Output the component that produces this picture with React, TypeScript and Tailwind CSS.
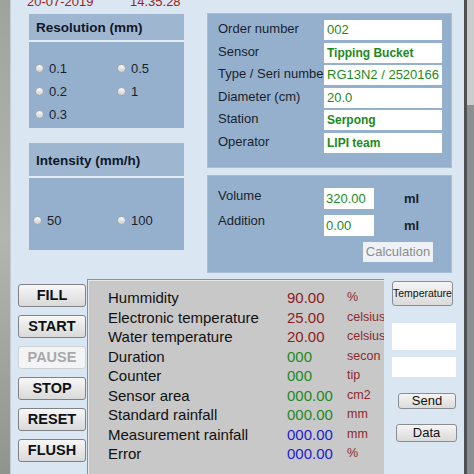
import type { ReactNode } from "react";

const sans = "font-['Liberation_Sans',Arial,sans-serif]";

const dataRows = [
  { label: "Hummidity", value: "90.00", unit: "%", tone: "red" },
  { label: "Electronic temperature", value: "25.00", unit: "celsius", tone: "red" },
  { label: "Water temperature", value: "20.00", unit: "celsius", tone: "red" },
  { label: "Duration", value: "000", unit: "secon", tone: "green" },
  { label: "Counter", value: "000", unit: "tip", tone: "green" },
  { label: "Sensor area", value: "000.00", unit: "cm2", tone: "green" },
  { label: "Standard rainfall", value: "000.00", unit: "mm", tone: "green" },
  { label: "Measurement rainfall", value: "000.00", unit: "mm", tone: "blue" },
  { label: "Error", value: "000.00", unit: "%", tone: "blue" },
];

const toneClass: Record<string, string> = {
  red: "text-[#8e1c1c]",
  green: "text-[#1c8a1c]",
  blue: "text-[#1c1cd2]",
};

const infoRows = [
  { label: "Order number", value: "002", bold: false },
  { label: "Sensor", value: "Tipping Bucket", bold: true },
  { label: "Type / Seri number", value: "RG13N2 / 2520166", bold: false },
  { label: "Diameter (cm)", value: "20.0", bold: false },
  { label: "Station", value: "Serpong", bold: true },
  { label: "Operator", value: "LIPI team", bold: true },
];

function Radio({ label }: { label: string }) {
  return (
    <div className="flex items-center gap-[5px] h-[23px]">
      <span className="w-[9px] h-[9px] rounded-full border border-[#a4a8ac] bg-gradient-to-b from-[#fafafa] to-[#cfd2d5]" />
      <span className="text-[13px] text-[#1a1f2c]">{label}</span>
    </div>
  );
}

function Panel({
  title,
  headH,
  bodyH,
  children,
}: {
  title: string;
  headH: string;
  bodyH: string;
  children: ReactNode;
}) {
  return (
    <div className="flex flex-col">
      <div className={`${headH} bg-[#9fb6d0] flex items-center pl-[7px] pt-[3px]`}>
        <span className="text-[13.5px] font-bold text-[#101828]">{title}</span>
      </div>
      <div className="h-[2px] bg-[#e4ecf4]" />
      <div className={`${bodyH} bg-[#95b0cd]`}>{children}</div>
    </div>
  );
}

function WinButton({ label, disabled }: { label: string; disabled?: boolean }) {
  return (
    <div
      className={
        disabled
          ? "h-[23px] rounded-[3px] border border-[#cdd2d7] bg-[#f3f4f5] flex items-center justify-center text-[14.5px] font-bold text-[#a9a9a9]"
          : "h-[23px] rounded-[3px] border border-[#7f8387] bg-gradient-to-b from-[#f7f7f7] to-[#d9d9d9] flex items-center justify-center text-[14.5px] font-bold text-[#111]"
      }
    >
      {label}
    </div>
  );
}

export default function App() {
  return (
    <div className={`w-[474px] h-[474px] overflow-hidden flex ${sans}`}>
      {/* desktop edge on the left */}
      <div className="w-[10px] h-full bg-gradient-to-b from-[#9ea49c] via-[#b3b6ae] to-[#8f948c]" />
      <div className="w-[1px] h-full bg-[#c3ccd4]" />

      <div className="w-[453px] h-full bg-[#dae6f2] flex flex-col">
        {/* clock row, cut at the top */}
        <div className="-mt-[6px] h-[15px] flex pl-[16px] text-[13px] leading-[15px] text-[#9a2424]">
          <span className="w-[103px]">20-07-2019</span>
          <span>14.35.28</span>
        </div>

        <div className="mt-[4px] flex pl-[18px]">
          <div className="w-[155px] pt-[1px] flex flex-col">
            <Panel title="Resolution (mm)" headH="h-[26px]" bodyH="h-[86px]">
              <div className="grid grid-cols-[82px_auto] pt-[15px] pl-[6px]">
                <Radio label="0.1" />
                <Radio label="0.5" />
                <Radio label="0.2" />
                <Radio label="1" />
                <Radio label="0.3" />
              </div>
            </Panel>
            <div className="mt-[15px]">
              <Panel title="Intensity (mm/h)" headH="h-[33px]" bodyH="h-[72px]">
                <div className="grid grid-cols-[84px_auto] pt-[31px] pl-[4px]">
                  <Radio label="50" />
                  <Radio label="100" />
                </div>
              </Panel>
            </div>
          </div>

          <div className="ml-[23px] w-[245px] flex flex-col">
            <div className="h-[155px] bg-[#95b0cd] border border-[#a9bed6] pt-[6px] pl-[10px] flex flex-col gap-[2.5px]">
              {infoRows.map((r) => (
                <div key={r.label} className="flex h-[20px] items-center">
                  <span className="w-[106px] overflow-hidden whitespace-nowrap text-[13px] text-[#1a1f2c] -mt-[2px]">
                    {r.label}
                  </span>
                  <span
                    className={`w-[118px] h-[20px] bg-white flex items-center pl-[3px] text-[#1c8a1c] ${
                      r.bold ? "text-[12px] font-bold" : "text-[13px]"
                    }`}
                  >
                    {r.value}
                  </span>
                </div>
              ))}
            </div>

            <div className="mt-[7px] h-[98px] bg-[#95b0cd] border border-[#a9bed6] pt-[12px] pl-[10px] flex flex-col">
              <div className="flex h-[21px] items-center">
                <span className="w-[106px] text-[13px] text-[#1a1f2c] -mt-[5px]">Volume</span>
                <span className="w-[50px] h-[21px] bg-white flex items-center pl-[2px] text-[13px] text-[#1c8a1c]">
                  320.00
                </span>
                <span className="ml-[30px] mt-[1px] text-[13px] font-bold text-[#1a1f2c]">ml</span>
              </div>
              <div className="mt-[6px] flex h-[21px] items-center">
                <span className="w-[106px] text-[13px] text-[#1a1f2c] -mt-[9px]">Addition</span>
                <span className="w-[50px] h-[21px] bg-white flex items-center pl-[2px] text-[13px] text-[#1c8a1c]">
                  0.00
                </span>
                <span className="ml-[30px] mt-[1px] text-[13px] font-bold text-[#1a1f2c]">ml</span>
              </div>
              <div className="mt-[6px] ml-[145px] w-[70px] h-[20px] bg-[#eef2f6] flex items-center justify-center text-[13px] text-[#8a8d91]">
                Calculation
              </div>
            </div>
          </div>
        </div>

        <div className="mt-[6px] flex pl-[7px] flex-1 min-h-0">
          <div className="w-[68px] pt-[5px] flex flex-col gap-[8px]">
            <WinButton label="FILL" />
            <WinButton label="START" />
            <WinButton label="PAUSE" disabled />
            <WinButton label="STOP" />
            <WinButton label="RESET" />
            <WinButton label="FLUSH" />
          </div>

          <div className="ml-[1px] w-[297px] h-[210px] bg-[#c8c8c8] border-t border-l border-[#8f8f8f] shadow-[inset_1px_1px_0_#e6e6e6] overflow-hidden pt-[8px] pl-[20px]">
            {dataRows.map((r) => (
              <div key={r.label} className="grid grid-cols-[179px_60px_auto] h-[19.5px] whitespace-nowrap">
                <span className="text-[15px] leading-[19.5px] text-[#111]">{r.label}</span>
                <span className={`text-[15px] leading-[19.5px] ${toneClass[r.tone]}`}>{r.value}</span>
                <span className="text-[12.5px] leading-[18px] text-[#8e2a2a]">{r.unit}</span>
              </div>
            ))}
          </div>

          <div className="ml-[8px] w-[65px] flex flex-col">
            <div className="mt-[2px] w-[61px] h-[25px] rounded-[3px] border border-[#8a8e92] bg-gradient-to-b from-[#f5f5f5] to-[#dadada] flex items-center justify-center text-[10.5px] text-[#111] whitespace-nowrap">
              Temperature
            </div>
            <div className="mt-[17px] w-[64px] h-[27px] bg-white" />
            <div className="mt-[7px] w-[64px] h-[20px] bg-white" />
            <div className="mt-[16px] ml-[6px] w-[58px] h-[16px] rounded-[3px] border border-[#8a8e92] bg-gradient-to-b from-[#f5f5f5] to-[#dadada] flex items-center justify-center text-[13px] text-[#111]">
              Send
            </div>
            <div className="mt-[15px] ml-[4px] w-[61px] h-[18px] rounded-[3px] border border-[#8a8e92] bg-gradient-to-b from-[#f5f5f5] to-[#dadada] flex items-center justify-center text-[13px] text-[#111]">
              Data
            </div>
          </div>
        </div>
      </div>

      {/* window frame on the right */}
      <div className="w-[3px] h-full bg-[#4e5154]" />
      <div className="w-[7px] h-full flex flex-col">
        <div className="h-[105px] bg-[#c9cbcd]" />
        <div className="flex-1 bg-[#8d9093]" />
      </div>
    </div>
  );
}
